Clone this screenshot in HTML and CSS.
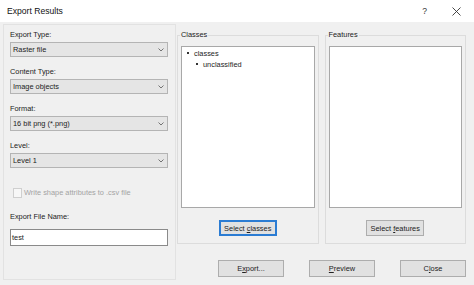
FILE: index.html
```html
<!DOCTYPE html>
<html lang="en">
<head>
  <meta charset="UTF-8" />
  <title>Export Results</title>
  <link rel="stylesheet" href="styles.css">
</head>
<body>
  <div class="dialog">
    <div class="titlebar">
      <span class="title">Export Results</span>
      <span class="help">?</span>
      <svg class="close-x" width="9" height="9" viewBox="0 0 9 9"><path d="M0.5 0.5 L8.5 8.5 M8.5 0.5 L0.5 8.5" stroke="#333" stroke-width="0.9" fill="none"/></svg>
    </div>

    <div class="content">
      <div class="left-panel">
        <div class="field">
          <label>Export Type:</label>
          <div class="combo"><span>Raster file</span><svg width="6" height="4" viewBox="0 0 6 4"><path d="M0.5 0.5 L3 3 L5.5 0.5" stroke="#555" stroke-width="0.8" fill="none"/></svg></div>
        </div>
        <div class="field">
          <label>Content Type:</label>
          <div class="combo"><span>Image objects</span><svg width="6" height="4" viewBox="0 0 6 4"><path d="M0.5 0.5 L3 3 L5.5 0.5" stroke="#555" stroke-width="0.8" fill="none"/></svg></div>
        </div>
        <div class="field">
          <label>Format:</label>
          <div class="combo"><span>16 bit png (*.png)</span><svg width="6" height="4" viewBox="0 0 6 4"><path d="M0.5 0.5 L3 3 L5.5 0.5" stroke="#555" stroke-width="0.8" fill="none"/></svg></div>
        </div>
        <div class="field">
          <label>Level:</label>
          <div class="combo"><span>Level 1</span><svg width="6" height="4" viewBox="0 0 6 4"><path d="M0.5 0.5 L3 3 L5.5 0.5" stroke="#555" stroke-width="0.8" fill="none"/></svg></div>
        </div>

        <div class="check-row">
          <span class="checkbox"></span>
          <span class="check-label">Write shape attributes to .csv file</span>
        </div>

        <div class="field name-field">
          <label>Export File Name:</label>
          <div class="textbox">test</div>
        </div>
      </div>

      <div class="right-col">
        <div class="groups">
          <fieldset class="group">
            <legend>Classes</legend>
            <div class="listbox">
              <ul class="tree">
                <li>classes
                  <ul>
                    <li>unclassified</li>
                  </ul>
                </li>
              </ul>
            </div>
            <div class="group-actions">
              <button class="btn focused">Select <u>c</u>lasses</button>
            </div>
          </fieldset>

          <fieldset class="group">
            <legend>Features</legend>
            <div class="listbox"></div>
            <div class="group-actions">
              <button class="btn">Select <u>f</u>eatures</button>
            </div>
          </fieldset>
        </div>

        <div class="actions">
          <button class="btn wide">E<u>x</u>port...</button>
          <button class="btn wide"><u>P</u>review</button>
          <button class="btn wide">C<u>l</u>ose</button>
        </div>
      </div>
    </div>
  </div>
</body>
</html>
```

FILE: styles.css
```css
body {
  margin: 0;
  font-family: "Liberation Sans", Arial, sans-serif;
  font-size: 7.4px;
  color: #222;
}
.dialog {
  width: 474px;
  height: 285px;
  background: #f0f0f0;
  display: flex;
  flex-direction: column;
  overflow: hidden;
}
.titlebar {
  height: 22px;
  background: #fff;
  display: flex;
  align-items: center;
  padding: 0 13px 0 7px;
  flex-shrink: 0;
}
.title {
  font-size: 8.6px;
  color: #111;
  flex: 1;
}
.help {
  font-size: 8.6px;
  color: #333;
  margin-right: 25px;
}
.content {
  flex: 1;
  display: flex;
  padding: 2px 0 5px 3px;
}
.left-panel {
  width: 173px;
  box-sizing: border-box;
  border: 1px solid #e2e2e2;
  padding: 5px 7px 0 6px;
}
.field {
  display: flex;
  flex-direction: column;
  margin-bottom: 10px;
}
.field label {
  line-height: 10px;
  margin-bottom: 2px;
}
.combo {
  height: 15px;
  box-sizing: border-box;
  background: #e5e5e5;
  border: 1px solid #b4b4b4;
  display: flex;
  align-items: center;
  justify-content: space-between;
  padding: 0 3px 0 2px;
}
.check-row {
  display: flex;
  align-items: center;
  gap: 2px;
  margin: 19px 0 0 3px;
  height: 11px;
}
.checkbox {
  width: 9px;
  height: 10px;
  box-sizing: border-box;
  border: 1px solid #cfcfcf;
  background: #f7f7f7;
}
.check-label {
  color: #a3a3a3;
}
.name-field {
  margin-top: 14px;
}
.name-field label {
  margin-bottom: 7px;
}
.textbox {
  height: 17px;
  box-sizing: border-box;
  background: #fff;
  border: 1px solid #8a8a8a;
  padding: 2px 1px;
  line-height: 11px;
}
.right-col {
  width: 289px;
  margin-left: 1px;
  display: flex;
  flex-direction: column;
  padding-top: 5px;
}
.groups {
  display: flex;
  gap: 6px;
}
.group {
  flex: 1;
  margin: 0;
  min-width: 0;
  border: 1px solid #dcdcdc;
  padding: 5px 3px 7px 3px;
  display: flex;
  flex-direction: column;
}
.group legend {
  padding: 0 1px;
  margin-left: -1px;
  line-height: 12px;
}
.listbox {
  height: 162px;
  box-sizing: border-box;
  background: #fff;
  border: 1px solid #a8a8a8;
}
.tree {
  margin: 0;
  padding: 1px 0 0 12px;
  list-style: none;
  color: #222;
}
.tree li {
  line-height: 11px;
  color: #222;
  position: relative;
}
.tree li::before {
  content: "";
  position: absolute;
  left: -7px;
  top: 4px;
  width: 2px;
  height: 2px;
  background: #333;
}
.tree ul {
  margin: 0;
  padding-left: 9px;
  list-style: none;
}
.group-actions {
  display: flex;
  justify-content: center;
  margin-top: 12px;
}
.btn {
  font-family: inherit;
  font-size: 7.4px;
  color: #222;
  height: 16px;
  width: 58px;
  padding: 0;
  background: #e1e1e1;
  border: 1px solid #adadad;
  border-radius: 0;
}
.btn.focused {
  border: 1px solid #2b7cd3;
  box-shadow: inset 0 0 0 1px #2b7cd3;
}
.btn.wide {
  width: 66px;
  height: 17px;
}
.actions {
  display: flex;
  justify-content: flex-end;
  gap: 25px;
  margin-top: 16px;
}
```
